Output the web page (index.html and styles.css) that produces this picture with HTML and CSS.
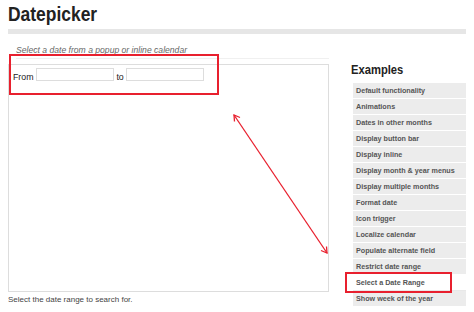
FILE: index.html
```html
<!DOCTYPE html>
<html>
  <head>
    <meta charset="utf-8">
    <title>Datepicker</title>
    <link rel="stylesheet" href="styles.css">
  </head>
  <body>
    <!-- title -->
    <div class="header">
      <h1 class="title">Datepicker</h1>
      <div class="title-bar"></div>
    </div>
    <div class="content">
      <!-- demo -->
      <div class="main">
        <p class="desc">Select a date from a popup or inline calendar</p>
        <div class="demo-frame">
          <label class="field">From <input type="text" class="date-input"></label>
          <label class="field">to <input type="text" class="date-input"></label>
        </div>
        <p class="demo-note">Select the date range to search for.</p>
      </div>
      <!-- examples -->
      <div class="side">
        <h3 class="side-title">Examples</h3>
        <ul class="examples">
          <li>Default functionality</li>
          <li>Animations</li>
          <li>Dates in other months</li>
          <li>Display button bar</li>
          <li>Display inline</li>
          <li>Display month &amp; year menus</li>
          <li>Display multiple months</li>
          <li>Format date</li>
          <li>Icon trigger</li>
          <li>Localize calendar</li>
          <li>Populate alternate field</li>
          <li>Restrict date range</li>
          <li class="active">Select a Date Range</li>
          <li>Show week of the year</li>
        </ul>
      </div>
    </div>
    <!-- annotations -->
    <div class="mark mark-fields"></div>
    <div class="mark mark-item"></div>
    <svg class="arrow" width="474" height="312" viewBox="0 0 474 312">
      <line x1="234" y1="115" x2="327" y2="253" stroke="#e8202e" stroke-width="1.3"/>
      <polyline points="234.5,121.5 234,115 240,117.5" fill="none" stroke="#e8202e" stroke-width="1.3"/>
      <polyline points="321,250.5 327,253 326.5,246.5" fill="none" stroke="#e8202e" stroke-width="1.3"/>
    </svg>
  </body>
</html>
```

FILE: styles.css
```css
/* reset */

body {
  margin: 0;
  background-color: #fff;
  font-family: "Liberation Sans", Arial, sans-serif;
  color: #333;
}
p, h1, h3, ul {
  margin: 0;
}
ul {
  padding-left: 0;
}
li {
  list-style-type: none;
}

/* title */

.header {
  padding: 2px 8px 0 8px;
}
.title {
  display: inline-block;
  font-size: 21px;
  font-weight: bold;
  line-height: 24px;
  color: #222;
  transform: scaleX(0.83);
  transform-origin: left center;
}
.title-bar {
  height: 5px;
  margin-top: 3px;
  background-color: #e6e6e6;
}

/* layout */

.content {
  display: flex;
  padding-left: 8px;
}
.main {
  width: 321px;
}
.side {
  width: 115px;
  margin-left: 22px;
}

/* demo */

.desc {
  margin: 11px 0 0 8px;
  padding-bottom: 2px;
  border-bottom: 1px solid #f0f0f0;
  font-size: 8.6px;
  font-style: italic;
  color: #666;
  line-height: 11px;
}
.demo-frame {
  height: 220px;
  margin-top: 5px;
  padding: 3px 4px;
  border: 1px solid #ddd;
  line-height: 13px;
}
.field {
  font-size: 8.8px;
  color: #222;
}
.field + .field {
  margin-left: -2px;
}
.date-input {
  box-sizing: border-box;
  width: 78px;
  height: 13px;
  margin: 0;
  padding: 0;
  border: 1px solid #ddd;
  vertical-align: top;
}
.demo-note {
  margin-top: 3px;
  font-size: 8px;
  color: #444;
}

/* examples */

.side-title {
  display: inline-block;
  margin-top: 28px;
  font-size: 13.5px;
  font-weight: bold;
  line-height: 15px;
  color: #222;
  transform: scaleX(0.83);
  transform-origin: left center;
}
.examples {
  margin: 5px 0 0 2px;
}
.examples li {
  height: 15px;
  padding-left: 3px;
  border-bottom: 1px solid #fff;
  background-color: #ececec;
  font-size: 7.2px;
  font-weight: bold;
  line-height: 15px;
  color: #555;
  white-space: nowrap;
}
.examples .active {
  background-color: #fff;
  border-bottom-color: #e8e8e8;
}

/* annotations */

.mark {
  position: absolute;
  border: 2px solid #e8202e;
}
.mark-fields {
  left: 9px;
  top: 54px;
  width: 206px;
  height: 37px;
}
.mark-item {
  left: 345px;
  top: 272px;
  width: 103px;
  height: 17px;
}
.arrow {
  position: absolute;
  left: 0;
  top: 0;
}
```
